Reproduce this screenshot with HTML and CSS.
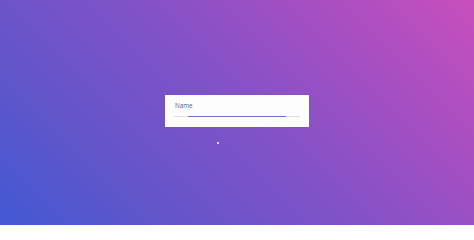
FILE: index.html
```html
<!DOCTYPE html>
<html>
<head>
<meta charset="utf-8">
<link rel="stylesheet" href="styles.css">
</head>
<body>
<main class="stage">
  <div class="card">
    <label class="label">Name</label>
    <div class="track"><div class="fill"></div></div>
  </div>
  <span class="cursor"></span>
</main>
</body>
</html>
```
FILE: styles.css
```css
html, body { margin: 0; padding: 0; }
body {
  width: 474px;
  height: 225px;
  overflow: hidden;
  font-family: "Open Sans", "Liberation Sans", sans-serif;
}
.stage {
  position: relative;
  width: 474px;
  height: 225px;
  background: linear-gradient(45deg, #4259d3 0%, #6355c9 25%, #8052c7 50%, #a44fc2 75%, #c84fbc 100%);
  display: flex;
  justify-content: center;
  padding-top: 95px;
  box-sizing: border-box;
}
.card {
  width: 144px;
  height: 32px;
  background: #fdfdfe;
  box-sizing: border-box;
  padding: 7px 9px 0 9px;
  display: flex;
  flex-direction: column;
}
.label {
  font-size: 6.3px;
  line-height: 8px;
  color: #5e6178;
  padding-left: 1px;
}
.track {
  margin-top: 6px;
  height: 1px;
  background: #dcdde3;
  position: relative;
}
.fill {
  position: absolute;
  left: 14px;
  width: 98px;
  top: -0.5px;
  height: 1.5px;
  background: #6a74c8;
}
.cursor {
  position: absolute;
  left: 217px;
  top: 142px;
  width: 2px;
  height: 2px;
  background: #ffffff;
  border-radius: 1px;
}
```
